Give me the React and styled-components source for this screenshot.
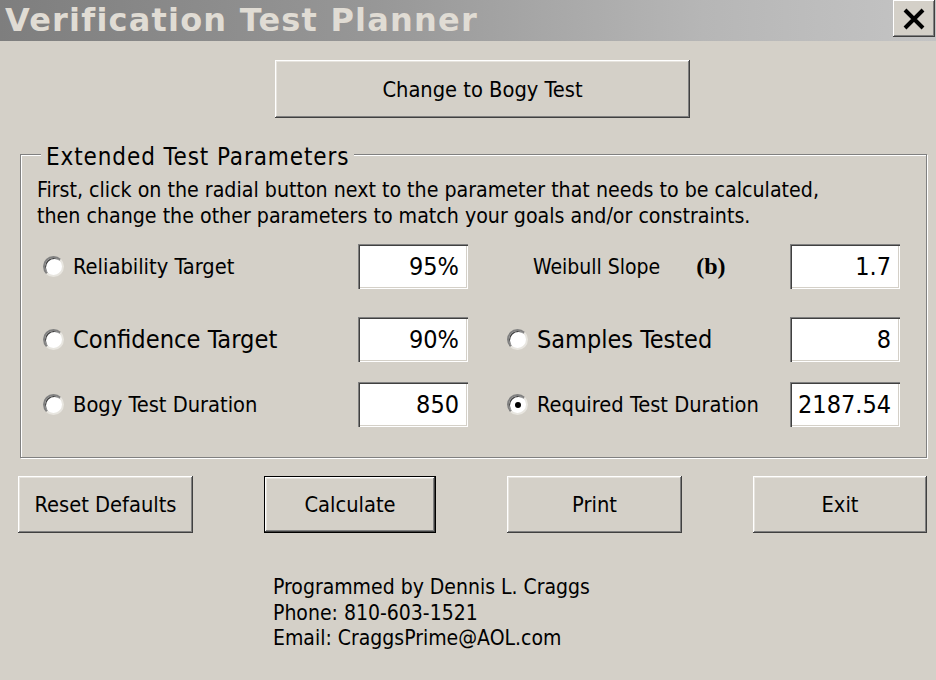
import React from 'react';
import styled, { createGlobalStyle, css } from 'styled-components';

const GlobalStyle = createGlobalStyle`
  html, body {
    margin: 0;
    padding: 0;
    background: #d4d0c8;
  }
`;

const Window = styled.div`
  width: 936px;
  height: 680px;
  overflow: hidden;
  background: #d4d0c8;
  color: #000;
  font-family: "DejaVu Sans Condensed", "DejaVu Sans", sans-serif;
  font-stretch: condensed;
  display: flex;
  flex-direction: column;
`;

const TitleBar = styled.div`
  height: 41px;
  flex: none;
  display: flex;
  justify-content: space-between;
  align-items: flex-start;
  background: linear-gradient(to right, #7e7e7e 0%, #979797 40%, #b6b6b6 75%, #c4c4c4 100%);
`;

const Title = styled.h1`
  margin: 0;
  padding-left: 5px;
  font-family: "DejaVu Sans", sans-serif;
  font-stretch: normal;
  font-size: 32px;
  letter-spacing: 1.2px;
  line-height: 41px;
  font-weight: bold;
  color: #e0dcd4;
`;

const CloseBox = styled.button`
  width: 42px;
  height: 37px;
  padding: 0;
  margin-right: 1px;
  border: none;
  background: #d4d0c8;
  display: flex;
  align-items: center;
  justify-content: center;
  box-shadow: inset -1px -1px #404040, inset 1px 1px #fff, inset -2px -2px #808080;
`;

const Raised = styled.button`
  width: ${(p) => p.$w}px;
  height: ${(p) => p.$h}px;
  flex: none;
  box-sizing: border-box;
  padding: 0;
  border: ${(p) => (p.$default ? '1px solid #000' : 'none')};
  background: #d4d0c8;
  color: #000;
  font-family: inherit;
  font-stretch: inherit;
  font-size: 21.7px;
  box-shadow: inset -1px -1px #404040, inset 1px 1px #fff, inset -2px -2px #808080, inset 2px 2px #e6e3dd;
`;

const TopRow = styled.div`
  margin-top: 19px;
  padding-left: 275px;
  display: flex;
`;

const GroupBox = styled.section`
  margin: 36px 0 0 20px;
  width: 907px;
  height: 304px;
  box-sizing: border-box;
  border: 1px solid #808080;
  box-shadow: inset 1px 1px #fff, 1px 1px #fff;
  display: flex;
  flex-direction: column;
  align-items: flex-start;
`;

const Legend = styled.span`
  margin: -10px 0 0 20px;
  padding: 0 5px;
  background: #d4d0c8;
  font-size: 24px;
  letter-spacing: 0.9px;
  line-height: 24px;
`;

const Hint = styled.p`
  margin: 8px 0 0 16px;
  font-size: 21.2px;
  line-height: 26px;
`;

const ParamRow = styled.div`
  margin-top: ${(p) => p.$top}px;
  padding-left: 22px;
  display: grid;
  grid-template-columns: 315px 110px 322px 110px;
  align-items: center;
  height: 45px;
`;

const Choice = styled.label`
  display: flex;
  align-items: center;
  gap: 9px;
  padding-left: ${(p) => p.$indent || 0}px;
  font-size: ${(p) => p.$size || 21.7}px;
  white-space: nowrap;
`;

const Radio = styled.span`
  width: 21px;
  height: 21px;
  flex: none;
  box-sizing: border-box;
  position: relative;
  border-radius: 50%;
  background: #fff;
  border: 2px solid;
  border-color: #808080 #e8e6e0 #e8e6e0 #808080;
  box-shadow: inset 1px 1px #404040;
  ${(p) =>
    p.$checked &&
    css`
      &::after {
        content: '';
        position: absolute;
        left: 5.5px;
        top: 5.5px;
        width: 6px;
        height: 6px;
        border-radius: 50%;
        background: #000;
      }
    `}
`;

const Plain = styled.span`
  display: flex;
  align-items: center;
  padding-left: 65px;
  font-size: 21px;
  white-space: nowrap;
`;

const Symbol = styled.b`
  margin-left: 36px;
  font-family: "Liberation Serif", "DejaVu Serif", serif;
  font-size: 24px;
`;

const Field = styled.input`
  width: 110px;
  height: 45px;
  box-sizing: border-box;
  border: none;
  margin: 0;
  padding: 0 9px 0 4px;
  background: #fff;
  text-align: right;
  font-family: inherit;
  font-stretch: inherit;
  font-size: 25px;
  color: #000;
  box-shadow: inset 1px 1px #808080, inset 2px 2px #404040, inset -1px -1px #fff, inset -2px -2px #d4d0c8;
`;

const ButtonRow = styled.div`
  margin-top: 18px;
  padding-left: 18px;
  display: flex;
  gap: 71px;
`;

const Credits = styled.div`
  margin-top: 42px;
  padding-left: 273px;
  font-size: 21px;
  line-height: 25.5px;
`;

const rows = [
  {
    top: 15,
    left: { label: 'Reliability Target', value: '95%' },
    right: { weibull: true, value: '1.7' },
  },
  {
    top: 28,
    left: { label: 'Confidence Target', value: '90%', size: 25.2 },
    right: { label: 'Samples Tested', value: '8', size: 25 },
  },
  {
    top: 20,
    left: { label: 'Bogy Test Duration', value: '850' },
    right: { label: 'Required Test Duration', value: '2187.54', checked: true },
  },
];

const buttons = [
  { text: 'Reset Defaults', w: 175 },
  { text: 'Calculate', w: 172, def: true },
  { text: 'Print', w: 175 },
  { text: 'Exit', w: 174 },
];

export default function App() {
  return (
    <Window>
      <GlobalStyle />
      <TitleBar>
        <Title>Verification Test Planner</Title>
        <CloseBox aria-label="Close">
          <svg width="24" height="22" viewBox="0 0 24 22">
            <path d="M3 2 L21 20 M21 2 L3 20" stroke="#000" strokeWidth="4" fill="none" />
          </svg>
        </CloseBox>
      </TitleBar>

      <TopRow>
        <Raised $w={415} $h={58}>Change to Bogy Test</Raised>
      </TopRow>

      <GroupBox>
        <Legend>Extended Test Parameters</Legend>
        <Hint>
          First, click on the radial button next to the parameter that needs to be calculated,
          <br />
          then change the other parameters to match your goals and/or constraints.
        </Hint>
        {rows.map((r, i) => (
          <ParamRow key={i} $top={r.top}>
            <Choice $size={r.left.size}>
              <Radio $checked={r.left.checked} />
              {r.left.label}
            </Choice>
            <Field defaultValue={r.left.value} />
            {r.right.weibull ? (
              <Plain>
                Weibull Slope
                <Symbol>(b)</Symbol>
              </Plain>
            ) : (
              <Choice $indent={39} $size={r.right.size}>
                <Radio $checked={r.right.checked} />
                {r.right.label}
              </Choice>
            )}
            <Field defaultValue={r.right.value} />
          </ParamRow>
        ))}
      </GroupBox>

      <ButtonRow>
        {buttons.map((b) => (
          <Raised key={b.text} $w={b.w} $h={57} $default={b.def}>
            {b.text}
          </Raised>
        ))}
      </ButtonRow>

      <Credits>
        Programmed by Dennis L. Craggs
        <br />
        Phone: 810-603-1521
        <br />
        Email: CraggsPrime@AOL.com
      </Credits>
    </Window>
  );
}
